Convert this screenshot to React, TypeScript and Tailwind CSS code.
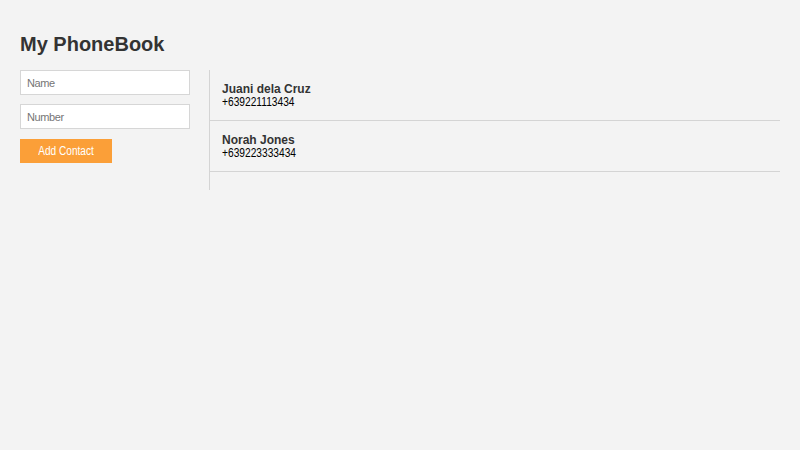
const contacts = [
  { name: "Juani dela Cruz", number: "+639221113434" },
  { name: "Norah Jones", number: "+639223333434" },
];

export default function App() {
  return (
    <div className="min-h-screen bg-[#f3f3f3] px-5 pt-[32px] font-['Liberation_Sans',Arial,sans-serif] text-[#333]">
      <h1 className="text-[20px] font-bold leading-[24px] mb-[14px]">My PhoneBook</h1>
      <div className="flex">
        {/* Form */}
        <div className="w-[170px] mr-[19px] flex flex-col">
          <input
            placeholder="Name"
            className="h-[25px] w-full border border-[#d6d6d6] bg-white px-[6px] text-[11px] tracking-[-0.4px] text-[#333] placeholder:text-[#757575] outline-none"
          />
          <input
            placeholder="Number"
            className="mt-[9px] h-[25px] w-full border border-[#d6d6d6] bg-white px-[6px] text-[11px] tracking-[-0.4px] text-[#333] placeholder:text-[#757575] outline-none"
          />
          <button className="mt-[10px] h-[24px] w-[92px] bg-[#fb9f38] text-[12px] text-white">
            <span className="inline-block scale-x-[0.84]">Add Contact</span>
          </button>
        </div>

        {/* List */}
        <div className="flex-1 border-l border-[#d4d4d4] pb-[18px]">
          {contacts.map((c) => (
            <div key={c.name} className="h-[51px] border-b border-[#d4d4d4] pl-[12px] pt-[12px]">
              <div className="text-[12px] font-bold leading-[14px]">{c.name}</div>
              <div className="text-[12px] leading-[12px] text-black">
                <span className="inline-block origin-left scale-x-[0.85]">{c.number}</span>
              </div>
            </div>
          ))}
        </div>
      </div>
    </div>
  );
}
